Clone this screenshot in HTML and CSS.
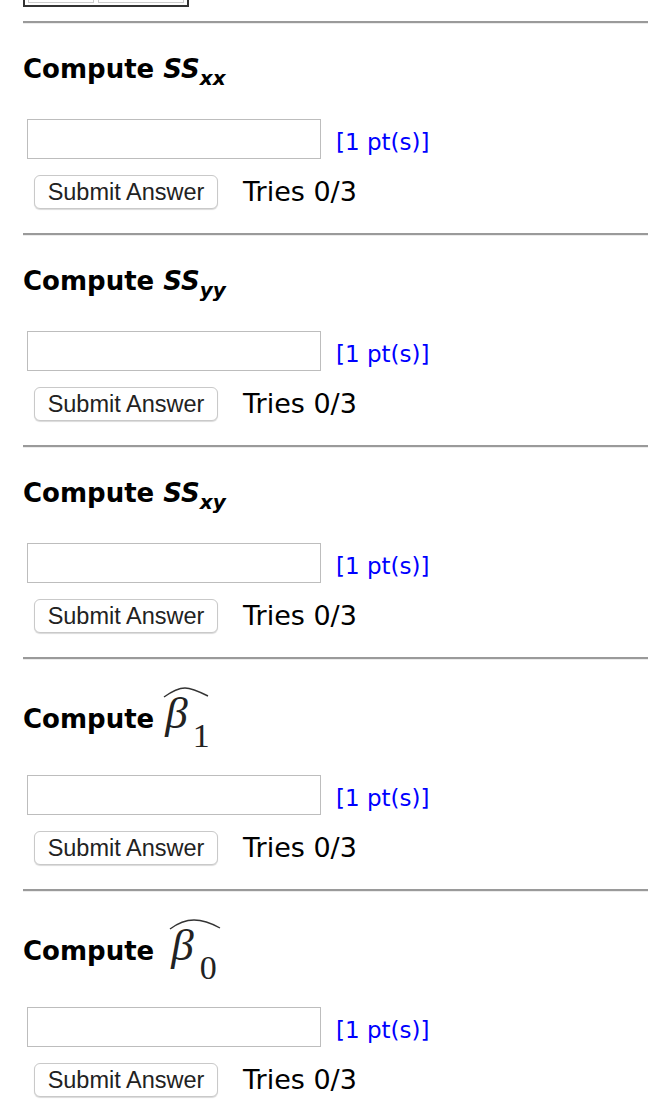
FILE: index.html
```html
<!DOCTYPE html>
<html lang="en">
<head>
  <meta charset="UTF-8">
  <meta name="viewport" content="width=device-width, initial-scale=1.0">
  <title>Regression Questions</title>
  <link rel="stylesheet" href="styles.css">
</head>
<body>
  <div class="page">
    <!-- tail of the data table from the part above -->
    <div class="table-tail">
      <div class="cell cell-x"></div>
      <div class="cell cell-y"></div>
    </div>

    <hr class="rule">

    <div class="question">
      <h3 class="q-title">Compute <i>SS<sub>xx</sub></i></h3>
      <div class="answer-row">
        <input type="text" class="answer" />
        <span class="pts">[1 pt(s)]</span>
      </div>
      <div class="submit-row">
        <button type="button">Submit Answer</button>
        <span class="tries">Tries 0/3</span>
      </div>
    </div>

    <hr class="rule">

    <div class="question">
      <h3 class="q-title">Compute <i>SS<sub>yy</sub></i></h3>
      <div class="answer-row">
        <input type="text" class="answer" />
        <span class="pts">[1 pt(s)]</span>
      </div>
      <div class="submit-row">
        <button type="button">Submit Answer</button>
        <span class="tries">Tries 0/3</span>
      </div>
    </div>

    <hr class="rule">

    <div class="question">
      <h3 class="q-title">Compute <i>SS<sub>xy</sub></i></h3>
      <div class="answer-row">
        <input type="text" class="answer" />
        <span class="pts">[1 pt(s)]</span>
      </div>
      <div class="submit-row">
        <button type="button">Submit Answer</button>
        <span class="tries">Tries 0/3</span>
      </div>
    </div>

    <hr class="rule">

    <div class="question">
      <h3 class="q-title math-title">Compute <span class="math">
          <svg class="hat" width="46" height="12" viewBox="0 0 46 12"><path d="M1 11 C8 6 15 2 22 2 C29 2 37 6 45 10" fill="none" stroke="#333" stroke-width="1.4"/></svg><span class="beta">β</span><span class="idx">1</span></span></h3>
      <div class="answer-row">
        <input type="text" class="answer" />
        <span class="pts">[1 pt(s)]</span>
      </div>
      <div class="submit-row">
        <button type="button">Submit Answer</button>
        <span class="tries">Tries 0/3</span>
      </div>
    </div>

    <hr class="rule">

    <div class="question">
      <h3 class="q-title math-title">Compute <span class="math wide">
          <svg class="hat" width="52" height="12" viewBox="0 0 52 12"><path d="M1 11 C9 5 17 2 25 2 C33 2 42 5 51 10" fill="none" stroke="#333" stroke-width="1.4"/></svg><span class="beta">β</span><span class="idx">0</span></span></h3>
      <div class="answer-row">
        <input type="text" class="answer" />
        <span class="pts">[1 pt(s)]</span>
      </div>
      <div class="submit-row">
        <button type="button">Submit Answer</button>
        <span class="tries">Tries 0/3</span>
      </div>
    </div>
  </div>
</body>
</html>
```

FILE: styles.css
```css
body {
  margin: 0;
  font-family: "DejaVu Sans", Verdana, sans-serif;
  background: #fff;
  color: #000;
}

.page {
  padding-left: 23px;
}

/* bottom edge of the table above */
.table-tail {
  display: flex;
  gap: 4px;
  width: 166px;
  height: 7px;
  padding: 0 3px 3px;
  box-sizing: border-box;
  border: solid #333;
  border-width: 0 2px 2px;
}

.cell {
  height: 2px;
  border: 1px solid #ccc;
  border-top: none;
}

.cell-x {
  width: 64px;
}

.cell-y {
  flex: 1;
}

.rule {
  margin: 0;
  height: 0;
  border: 0;
  border-top: 2px solid #9a9a9a;
  border-bottom: 1px solid #ececec;
}

.table-tail + .rule {
  margin-top: 14px;
}

.question {
  padding-bottom: 24px;
}

.q-title {
  margin: 30px 0 35px;
  height: 30px;
  font-size: 26px;
  line-height: 30px;
  font-weight: bold;
}

.q-title sub {
  font-size: 20px;
  line-height: 0;
  vertical-align: -7px;
}

.math-title {
  margin: 44px 0 33px;
  height: 38px;
}

.math {
  position: relative;
  margin-left: 2px;
  font-weight: normal;
  line-height: 0;
}

.math.wide {
  margin-left: 8px;
}

.hat {
  position: absolute;
  left: -2px;
  top: -18px;
}

.beta {
  font-family: "Liberation Serif", "Times New Roman", serif;
  font-style: italic;
  font-size: 45px;
  color: #222;
}

.idx {
  margin-left: 5px;
  font-family: "Liberation Serif", "Times New Roman", serif;
  font-size: 34px;
  color: #222;
  vertical-align: -19px;
}

.math.wide .idx {
  margin-left: 6px;
}

.answer-row {
  display: flex;
  align-items: flex-start;
  height: 40px;
  padding-left: 4px;
}

.answer {
  width: 294px;
  height: 40px;
  margin: 0;
  box-sizing: border-box;
  border: 1px solid #bdbdbd;
  border-radius: 0;
  background: #fff;
}

.pts {
  margin-left: 15px;
  padding-top: 3px;
  font-size: 23px;
  line-height: 40px;
  color: #0000ff;
}

.submit-row {
  display: flex;
  align-items: flex-start;
  height: 34px;
  margin-top: 16px;
  padding-left: 11px;
}

button {
  width: 184px;
  height: 34px;
  margin: 0;
  padding: 0;
  box-sizing: border-box;
  font-family: "Liberation Sans", Arial, sans-serif;
  font-size: 23.5px;
  color: #222;
  background: #fff;
  border: 1px solid #c9c9c9;
  border-radius: 6px;
  box-shadow: 0 1px 1px rgba(0, 0, 0, 0.15);
  cursor: pointer;
}

.tries {
  margin-left: 25px;
  font-size: 27px;
  line-height: 34px;
}
```
